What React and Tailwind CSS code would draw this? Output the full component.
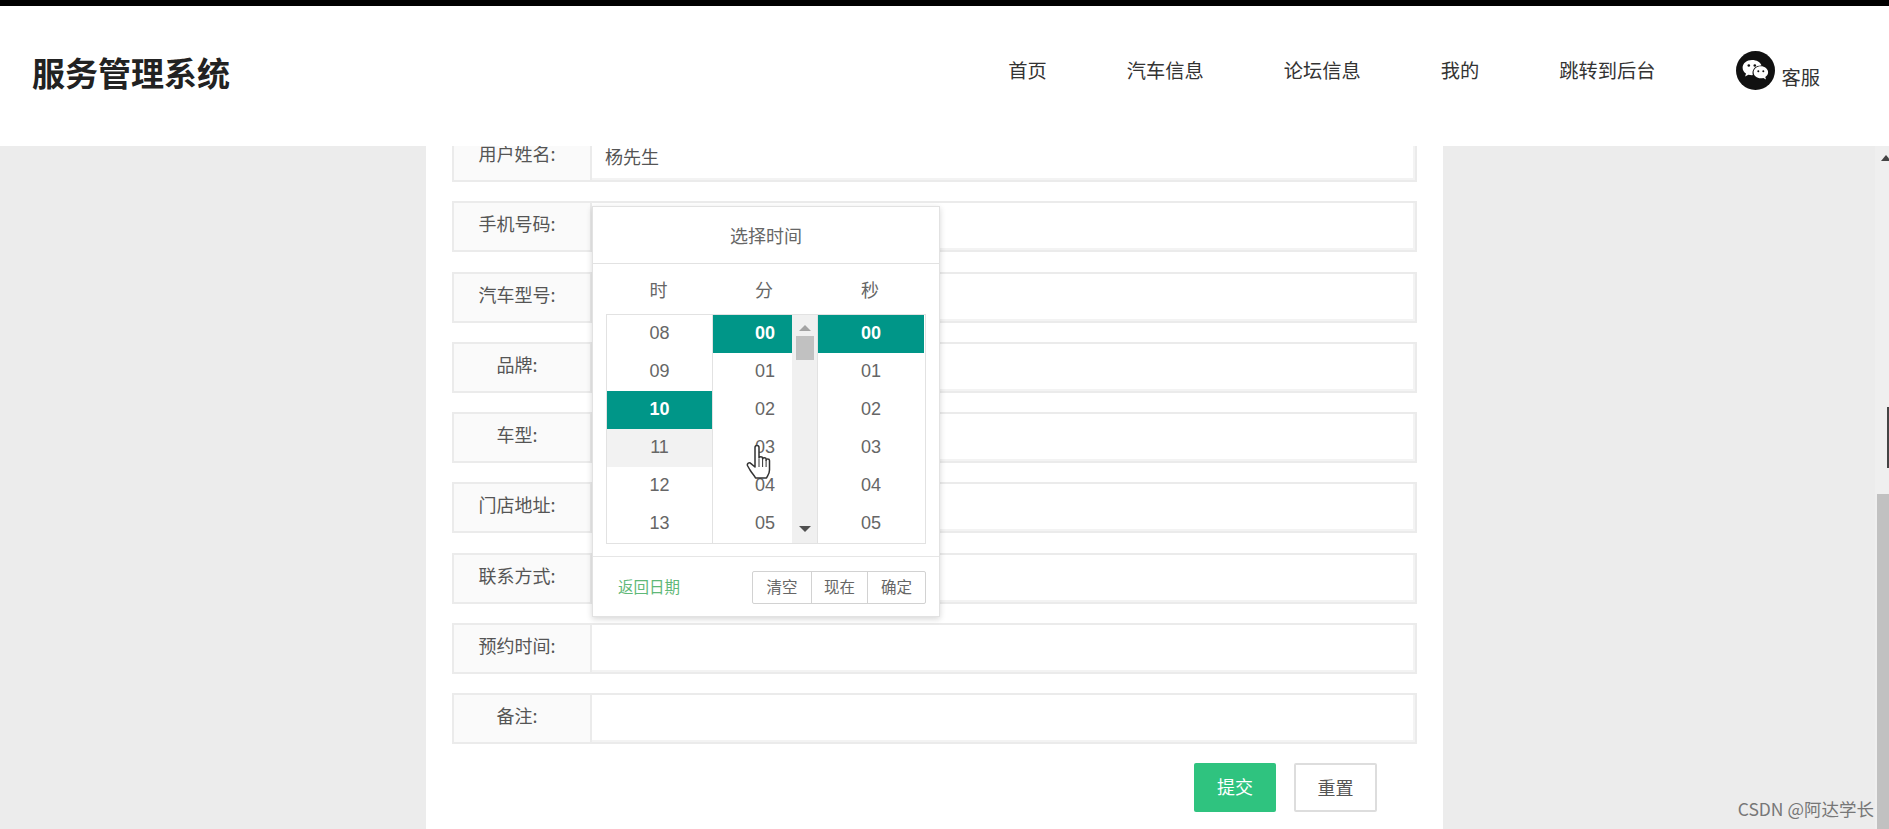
const NAV_ITEMS = ["首页", "汽车信息", "论坛信息", "我的", "跳转到后台"];
const FIELDS = [
  { label: "用户姓名:", value: "杨先生" },
  { label: "手机号码:" },
  { label: "汽车型号:" },
  { label: "品牌:" },
  { label: "车型:" },
  { label: "门店地址:" },
  { label: "联系方式:" },
  { label: "预约时间:" },
  { label: "备注:" },
];
const HOURS = ["08", "09", "10", "11", "12", "13"];
const MINS = ["00", "01", "02", "03", "04", "05"];

function WechatIcon() {
  return (
    <svg width="39" height="39" viewBox="0 0 39 39" className="shrink-0">
      <circle cx="19.5" cy="19.5" r="19.5" fill="#111" />
      <path d="M16 9c-5.2 0-9.4 3.4-9.4 7.7 0 2.4 1.3 4.5 3.4 5.9l-.9 2.9 3.3-1.8c1.1.3 2.3.5 3.6.5l.9-.1c-.3-.8-.4-1.6-.4-2.4 0-4 3.7-7.2 8.3-7.2h.7C24.500 11.100 20.600 9 16 9z" fill="#fff" />
      <path d="M24.800 15.200c-4 0-7.200 2.700-7.200 6 0 3.400 3.200 6.100 7.200 6.100.9 0 1.700-.1 2.500-.4l2.700 1.500-.7-2.400c1.700-1.100 2.800-2.900 2.800-4.800 0-3.300-3.300-6-7.300-6z" fill="#fff" />
      <circle cx="12.800" cy="14.500" r="1.300" fill="#111" />
      <circle cx="18.800" cy="14.500" r="1.300" fill="#111" />
      <circle cx="22.300" cy="20.300" r="1" fill="#111" />
      <circle cx="27.300" cy="20.300" r="1" fill="#111" />
    </svg>
  );
}

// mouse pointer sitting over the minute column
function HandCursor() {
  return (
    <svg width="28" height="36" viewBox="0 0 28 36" className="absolute left-[320px] top-[298px]">
      <path
        d="M9 3.500c0-2.800 4-2.800 4 0V14c0-1.800 3.600-1.800 3.600 0v1c0-1.800 3.500-1.800 3.500 0v1.200c0-1.700 3.400-1.700 3.400 0.200 V26c0 4-2 5.500-3 8H9.500c-1-2.500-3-4-5.500-8l-2.300-4c-1.300-2.500 1.800-4.200 3.300-2.300L9 23z"
        fill="#fff"
        stroke="#333"
        strokeWidth="1.500"
        strokeLinejoin="round"
      />
      <path d="M13 15v8M16.600 15v8M20.100 16v7" stroke="#333" strokeWidth="1" fill="none" />
    </svg>
  );
}

function FormRow({ label, value }) {
  return (
    <div className="flex h-[51px] border-2 border-[#ebebeb] bg-white">
      <div className="flex w-[138px] shrink-0 items-center justify-center border-r-2 border-[#ebebeb] bg-[#fafafa] pb-[6px] pr-[10px] text-[18px] text-[#555]">
        {label}
      </div>
      <div className="flex flex-1 items-center border-b-2 border-r-2 border-[#f3f3f3] pl-[13px] pt-[2px] text-[18px] text-[#555]">{value}</div>
    </div>
  );
}

function TimeCol({ items, active, hover }) {
  return (
    <ul className="h-[228px] overflow-hidden [font-family:'Liberation_Sans',sans-serif]">
      {items.map((n) => (
        <li
          key={n}
          className={`flex h-[38px] items-center justify-center pb-[2px] text-[18px] ${
            n === active ? "bg-[#009688] font-bold text-white" : n === hover ? "bg-[#f2f2f2] text-[#666]" : "text-[#666]"
          }`}
        >
          {n}
        </li>
      ))}
    </ul>
  );
}

function TimePicker() {
  return (
    <div className="absolute left-[166px] top-[60px] flex h-[411px] w-[348px] flex-col border border-[#e2e2e2] bg-white shadow-[0_2px_6px_rgba(0,0,0,0.16)]">
      <div className="flex h-[57px] items-center justify-center border-b border-[#e2e2e2] text-[18px] text-[#666]">选择时间</div>
      <div className="px-[13px]">
        <div className="grid h-[50px] grid-cols-[105px_106px_106px] items-center text-center text-[18px] text-[#666]">
          <span>时</span>
          <span>分</span>
          <span>秒</span>
        </div>
        <div className="grid grid-cols-[105px_106px_106px] border border-[#e2e2e2]">
          <TimeCol items={HOURS} active="10" hover="11" />
          <div className="relative border-x border-[#e2e2e2]">
            <TimeCol items={MINS} active="00" />
            <div className="absolute right-0 top-0 flex h-full w-[25px] flex-col items-center bg-[#f0f0f0] pt-[10px]">
              <div className="h-0 w-0 border-x-[6px] border-b-[6px] border-x-transparent border-b-[#a3a3a3]" />
              <div className="mt-[5px] h-[24px] w-[18px] bg-[#c1c1c1]" />
              <div className="mb-[11px] mt-auto h-0 w-0 border-x-[6px] border-t-[6px] border-x-transparent border-t-[#505050]" />
            </div>
          </div>
          <TimeCol items={MINS} active="00" />
        </div>
      </div>
      <div className="mt-auto flex h-[60px] items-center justify-between border-t border-[#e6e6e6] pl-[25px] pr-[13px] pt-[1px]">
        <span className="text-[15.500px] text-[#5fb878]">返回日期</span>
        <div className="flex h-[33px] rounded-[2px] border border-[#d2d2d2] text-[15.500px] text-[#666]">
          <span className="flex w-[58px] items-center justify-center">清空</span>
          <span className="flex w-[57px] items-center justify-center border-x border-[#d2d2d2]">现在</span>
          <span className="flex w-[57px] items-center justify-center">确定</span>
        </div>
      </div>
    </div>
  );
}

export default function App() {
  return (
    <div className="relative flex h-[829px] w-[1889px] flex-col overflow-hidden bg-white [font-family:'Noto_Sans_CJK_SC',sans-serif]">
      <div className="h-[6px] shrink-0 bg-black" />

      {/* header */}
      <header className="relative z-10 flex h-[140px] shrink-0 items-center justify-between bg-white pl-[32px] pr-[69px]">
        <h1 className="pb-[6px] text-[33px] font-bold text-[#222]">服务管理系统</h1>
        <nav className="flex items-center gap-[80px] pb-[12px] text-[19.250px] text-[#333]">
          {NAV_ITEMS.map((item) => (
            <a key={item} className="whitespace-nowrap">{item}</a>
          ))}
          <div className="flex items-center gap-[7px]">
            <WechatIcon />
            <span className="pt-[14px]">客服</span>
          </div>
        </nav>
      </header>

      <div className="flex min-h-0 flex-1">
        <div className="w-[426px] shrink-0 bg-[#ececec]" />

        <main className="relative w-[1017px] shrink-0 overflow-hidden bg-white px-[26px]">
          <div className="-mt-[15px] flex flex-col gap-y-[19.25px]">
            {FIELDS.map((f) => (
              <FormRow key={f.label} label={f.label} value={f.value} />
            ))}
          </div>
          <div className="mr-[40px] mt-[19px] flex justify-end gap-[18px] text-[18px]">
            <button className="h-[49px] w-[82px] rounded-[2px] bg-[#2fc37f] pb-[3px] text-white">提交</button>
            <button className="h-[49px] w-[83px] rounded-[2px] border-2 border-[#dddddd] bg-white text-[#555]">重置</button>
          </div>
          <TimePicker />
          <HandCursor />
        </main>

        <div className="flex-1 bg-[#ececec]" />

        {/* page scrollbar */}
        <div className="relative flex w-[14px] shrink-0 flex-col bg-[#efefef]">
          <div className="ml-[6px] mt-[9px] h-0 w-0 border-x-[5px] border-b-[6px] border-x-transparent border-b-[#444]" />
          <div className="ml-[2px] mt-auto h-[335px] bg-[#c1c1c1]" />
          <div className="absolute right-0 top-[261px] h-[61px] w-[2px] bg-[#444]" />
        </div>
      </div>

      <span className="absolute bottom-[7px] right-[15px] text-[17.500px] text-[#777]">CSDN @阿达学长</span>
    </div>
  );
}
